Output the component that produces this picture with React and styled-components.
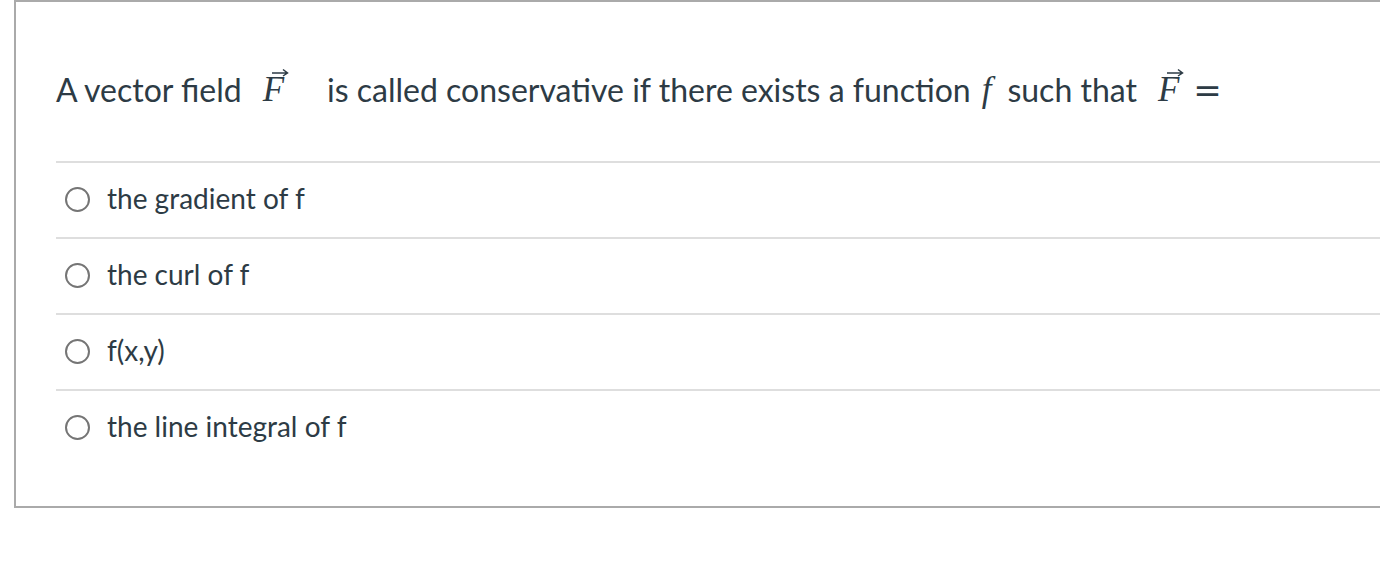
import React from "react";
import styled, { createGlobalStyle } from "styled-components";

const Global = createGlobalStyle`
  html, body { margin: 0; padding: 0; background: #fff; overflow: hidden; }
  body { font-family: Lato, "Open Sans", sans-serif; color: #2d3b45; }
`;

const Card = styled.div`
  margin-left: 14px;
  width: 1400px;
  border: 2px solid #aaaaaa;
  border-right: none;
  padding: 70px 0 41px 40px;
  box-sizing: border-box;
`;

const Question = styled.div`
  font-size: 32px;
  line-height: 36px;
  height: 36px;
  margin-bottom: 53px;
  white-space: nowrap;
  display: flex;
  align-items: center;
`;

const MathVar = styled.span`
  font-family: "Liberation Serif", "DejaVu Serif", serif;
  font-style: italic;
  font-size: 35px;
  position: relative;
  display: inline-block;
  margin: ${(p) => p.$margin || "0"};
`;

const Arrow = styled.svg`
  position: absolute;
  left: 8px;
  top: -4px;
  width: 18px;
  height: 9px;
`;

const Equals = styled.span`
  font-family: "DejaVu Sans", sans-serif;
  font-size: 34px;
  margin-left: 14px;
`;

const Options = styled.div`
  display: flex;
  flex-direction: column;
`;

const Row = styled.label`
  display: flex;
  align-items: center;
  border-top: 2px solid #dedede;
  font-size: 28px;
  padding-bottom: 4px;
  box-sizing: content-box;
  height: 70px;
`;

const Radio = styled.span`
  width: 21px;
  height: 21px;
  border: 2px solid #757575;
  border-radius: 50%;
  margin-left: 9px;
  margin-right: 17px;
  margin-top: 2px;
  flex: none;
`;

const VecF = ({ margin }) => (
  <MathVar $margin={margin}>
    F
    <Arrow viewBox="0 0 18 9">
      <path d="M1 5h15M12 1.5L16.5 5L12 8" fill="none" stroke="#2d3b45" strokeWidth="1.5" />
    </Arrow>
  </MathVar>
);

const options = ["the gradient of f", "the curl of f", "f(x,y)", "the line integral of f"];

export default function App() {
  return (
    <>
      <Global />
      <Card>
        <Question>
          A vector field
          <VecF margin="0 43px 0 21px" />
          is called conservative if there exists a function
          <MathVar $margin="0 16px 0 11px">f</MathVar>
          such that
          <VecF margin="0 0 0 21px" />
          <Equals>=</Equals>
        </Question>
        <Options>
          {options.map((o) => (
            <Row key={o}>
              <Radio />
              {o}
            </Row>
          ))}
        </Options>
      </Card>
    </>
  );
}
